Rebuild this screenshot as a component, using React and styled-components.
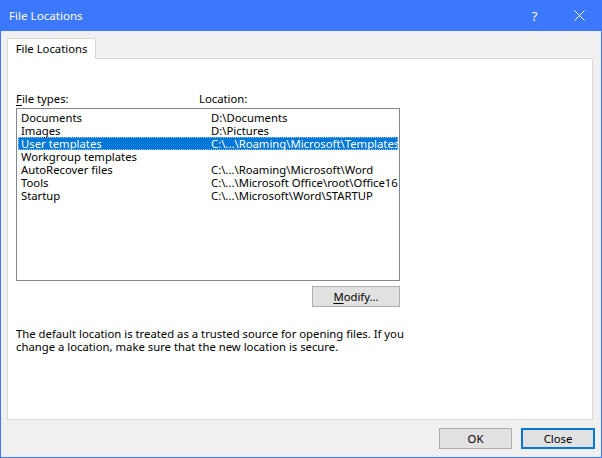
import React from 'react'
import styled, { createGlobalStyle } from 'styled-components'

const accent = '#3c78fc'
const select = '#0078d7'
const uiFont = `"Noto Sans", "Open Sans", sans-serif`
const textSize = '11.3px'

const GlobalStyle = createGlobalStyle`
    html, body {
        margin: 0;
        padding: 0;
        background: #f0f0f0;
    }
    body {
        font-family: ${uiFont};
        font-size: ${textSize};
        color: #000;
    }
`

const Window = styled.div`
    width: 602px;
    height: 458px;
    box-sizing: border-box;
    border: 1px solid ${accent};
    border-top: none;
    background: #f0f0f0;
    display: flex;
    flex-direction: column;
`
const TitleBar = styled.div`
    height: 31px;
    flex: none;
    background: ${accent};
    display: flex;
    align-items: center;
    margin: 0 -1px;
    color: #fff;
`
const Title = styled.div`
    flex: 1;
    padding-left: 9px;
    font-size: 11.6px;
    padding-bottom: 1px;
`
const CaptionButton = styled.div`
    width: 45px;
    height: 31px;
    display: flex;
    align-items: center;
    justify-content: center;
    font-size: 13px;
`
const Body = styled.div`
    flex: 1;
    display: flex;
    flex-direction: column;
    padding: 7px 8px 0 6px;
`
const TabStrip = styled.div`
    display: flex;
    height: 21px;
`
const Tab = styled.div`
    position: relative;
    z-index: 1;
    width: 89px;
    height: 21px;
    box-sizing: border-box;
    border: 1px solid #d9d9d9;
    border-bottom: none;
    background: #fff;
    display: flex;
    align-items: center;
    justify-content: center;
    padding-bottom: 1px;
`
const Panel = styled.div`
    height: 362px;
    box-sizing: border-box;
    margin-top: -1px;
    border: 1px solid #d9d9d9;
    background: #fff;
    padding: 32px 0 0 8px;
    display: flex;
    flex-direction: column;
`
const Columns = styled.div`
    display: flex;
    height: 15px;
    line-height: 15px;
    margin-bottom: 2px;
`
const Label = styled.div`
    width: ${p => p.$width}px;
`
const Accel = styled.span`
    text-decoration: underline;
    text-underline-offset: 2px;
`
const ListBox = styled.div`
    width: 384px;
    height: 173px;
    box-sizing: border-box;
    border: 1px solid #828790;
    padding: 2px 1px 0;
`
const Row = styled.div`
    display: flex;
    height: 13px;
    line-height: 13px;
    padding-left: 3px;
    box-sizing: border-box;
    white-space: nowrap;
    background: ${p => (p.$selected ? select : 'transparent')};
    color: ${p => (p.$selected ? '#fff' : '#000')};
    outline: ${p => (p.$selected ? '1px dotted #9fc6ef' : 'none')};
    outline-offset: -1px;
`
const Cell = styled.div`
    width: ${p => p.$width}px;
    flex: none;
`
const ButtonRow = styled.div`
    width: 384px;
    display: flex;
    justify-content: flex-end;
    margin-top: 5px;
`
const Button = styled.button`
    width: ${p => p.$width}px;
    height: 21px;
    box-sizing: border-box;
    background: #e1e1e1;
    border: ${p => (p.$default ? `2px solid ${select}` : '1px solid #adadad')};
    font-family: ${uiFont};
    font-size: ${textSize};
    color: #000;
    padding: 0 0 1px;
    margin: 0;
    display: flex;
    align-items: center;
    justify-content: center;
`
const Note = styled.p`
    margin: 20px 0 0;
    line-height: 13px;
`
const Footer = styled.div`
    display: flex;
    justify-content: flex-end;
    gap: 9px;
    margin-top: 8px;
    margin-right: -2px;
`

const rows = [
    ['Documents', 'D:\\Documents'],
    ['Images', 'D:\\Pictures'],
    ['User templates', 'C:\\...\\Roaming\\Microsoft\\Templates'],
    ['Workgroup templates', ''],
    ['AutoRecover files', 'C:\\...\\Roaming\\Microsoft\\Word'],
    ['Tools', 'C:\\...\\Microsoft Office\\root\\Office16'],
    ['Startup', 'C:\\...\\Microsoft\\Word\\STARTUP'],
]

function CloseGlyph() {
    return (
        <svg width="11" height="11" viewBox="0 0 11 11">
            <path d="M0.5 0.5 L10.5 10.5 M10.5 0.5 L0.5 10.5" stroke="#fff" strokeWidth="1" fill="none" />
        </svg>
    )
}

export default function App() {
    return (
        <>
            <GlobalStyle />
            <Window>
                <TitleBar>
                    <Title>File Locations</Title>
                    <CaptionButton>?</CaptionButton>
                    <CaptionButton><CloseGlyph /></CaptionButton>
                </TitleBar>
                <Body>
                    <TabStrip>
                        <Tab>File Locations</Tab>
                    </TabStrip>
                    <Panel>
                        <Columns>
                            <Label $width={183}><Accel>F</Accel>ile types:</Label>
                            <Label>Location:</Label>
                        </Columns>
                        <ListBox>
                            {rows.map(([type, loc], i) => (
                                <Row key={type} $selected={i === 2}>
                                    <Cell $width={190}>{type}</Cell>
                                    <Cell>{loc}</Cell>
                                </Row>
                            ))}
                        </ListBox>
                        <ButtonRow>
                            <Button $width={88}><Accel>M</Accel>odify...</Button>
                        </ButtonRow>
                        <Note>
                            The default location is treated as a trusted source for opening files. If you
                            <br />
                            change a location, make sure that the new location is secure.
                        </Note>
                    </Panel>
                    <Footer>
                        <Button $width={73}>OK</Button>
                        <Button $width={74} $default>Close</Button>
                    </Footer>
                </Body>
            </Window>
        </>
    )
}
